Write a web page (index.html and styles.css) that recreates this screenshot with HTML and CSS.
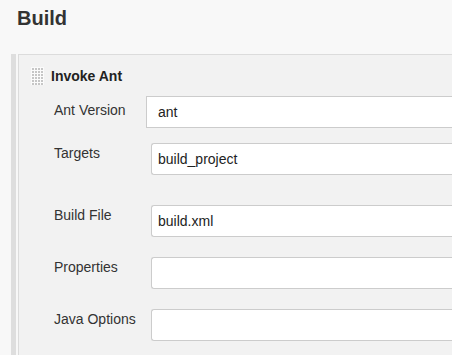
FILE: index.html
```html
<!DOCTYPE html>
<html lang="en">
<head>
    <meta charset="UTF-8">
    <meta name="viewport" content="width=device-width, initial-scale=1.0">
    <title>Build</title>
    <link rel="stylesheet" href="styles.css">
</head>
<body>
    <h1 class="page-title">Build</h1>
    <div class="section">
        <div class="panel">
            <div class="panel-header">
                <svg class="grip" width="13" height="18" viewBox="0 0 13 18">
                    <rect width="13" height="18" fill="#fbfbfb"/>
                    <g fill="#c6c6c6">
                        <rect x="1" y="1" width="2" height="2"/><rect x="4" y="1" width="2" height="2"/><rect x="7" y="1" width="2" height="2"/><rect x="10" y="1" width="2" height="2"/>
                        <rect x="1" y="4" width="2" height="2"/><rect x="4" y="4" width="2" height="2"/><rect x="7" y="4" width="2" height="2"/><rect x="10" y="4" width="2" height="2"/>
                        <rect x="1" y="7" width="2" height="2"/><rect x="4" y="7" width="2" height="2"/><rect x="7" y="7" width="2" height="2"/><rect x="10" y="7" width="2" height="2"/>
                        <rect x="1" y="10" width="2" height="2"/><rect x="4" y="10" width="2" height="2"/><rect x="7" y="10" width="2" height="2"/><rect x="10" y="10" width="2" height="2"/>
                        <rect x="1" y="13" width="2" height="2"/><rect x="4" y="13" width="2" height="2"/><rect x="7" y="13" width="2" height="2"/><rect x="10" y="13" width="2" height="2"/>
                        <rect x="1" y="16" width="2" height="2"/><rect x="4" y="16" width="2" height="2"/><rect x="7" y="16" width="2" height="2"/><rect x="10" y="16" width="2" height="2"/>
                    </g>
                </svg>
                <span class="panel-title">Invoke Ant</span>
            </div>
            <div class="panel-body">
                <div class="row row-select">
                    <label class="field-label" for="antVersion">Ant Version</label>
                    <select class="field-select" id="antVersion">
                        <option>ant</option>
                    </select>
                </div>
                <div class="row row-targets">
                    <label class="field-label" for="targets">Targets</label>
                    <input class="field-input" type="text" id="targets" value="build_project">
                </div>
                <div class="row">
                    <label class="field-label" for="buildFile">Build File</label>
                    <input class="field-input" type="text" id="buildFile" value="build.xml">
                </div>
                <div class="row">
                    <label class="field-label" for="properties">Properties</label>
                    <input class="field-input" type="text" id="properties">
                </div>
                <div class="row">
                    <label class="field-label" for="javaOptions">Java Options</label>
                    <input class="field-input" type="text" id="javaOptions">
                </div>
            </div>
        </div>
    </div>
</body>
</html>
```

FILE: styles.css
```css
html, body {
    overflow: hidden;
}
body {
    font-family: 'Liberation Sans', Arial, sans-serif;
    background: #f8f8f8;
    color: #333;
    margin: 0;
}
.page-title {
    margin: 0;
    padding: 6px 0 0 17px;
    font-size: 20px;
    line-height: 24px;
    font-weight: bold;
    color: #333;
}
.section {
    margin: 24px 0 0 11px;
    padding-left: 2px;
    border-left: 5px solid #dedede;
}
.panel {
    background: #f2f2f2;
    border: 1px solid #dcdcdc;
    border-right: none;
    padding-bottom: 20px;
}
.panel-header {
    display: flex;
    align-items: center;
    padding: 12px 0 0 12px;
    height: 18px;
}
.grip {
    display: block;
    margin-right: 7px;
}
.panel-title {
    font-size: 14px;
    line-height: 18px;
    font-weight: bold;
    color: #222;
}
.panel-body {
    padding: 11px 0 0 35px;
}
.row {
    display: flex;
    align-items: flex-start;
    margin-top: 20px;
}
.row-select {
    margin-top: 0;
}
.row-select + .row {
    margin-top: 15px;
}
.row-targets + .row {
    margin-top: 30px;
}
.field-label {
    width: 97px;
    flex: none;
    padding-top: 1px;
    font-size: 14px;
    line-height: 18px;
    color: #333;
}
.row-select .field-label {
    width: 92px;
    padding-top: 5px;
}
/* fields run on past the right edge of the window */
.field-input,
.field-select {
    flex: 1;
    min-width: 0;
    box-sizing: border-box;
    height: 32px;
    margin: 0;
    border: 1px solid #ccc;
    border-right: none;
    border-radius: 3px 0 0 3px;
    background: #fff;
    font-family: inherit;
    font-size: 14px;
    color: #222;
    padding: 0 6px;
    outline: none;
}
.field-select {
    -webkit-appearance: none;
    appearance: none;
    border-radius: 0;
    padding: 0 11px;
}
```
